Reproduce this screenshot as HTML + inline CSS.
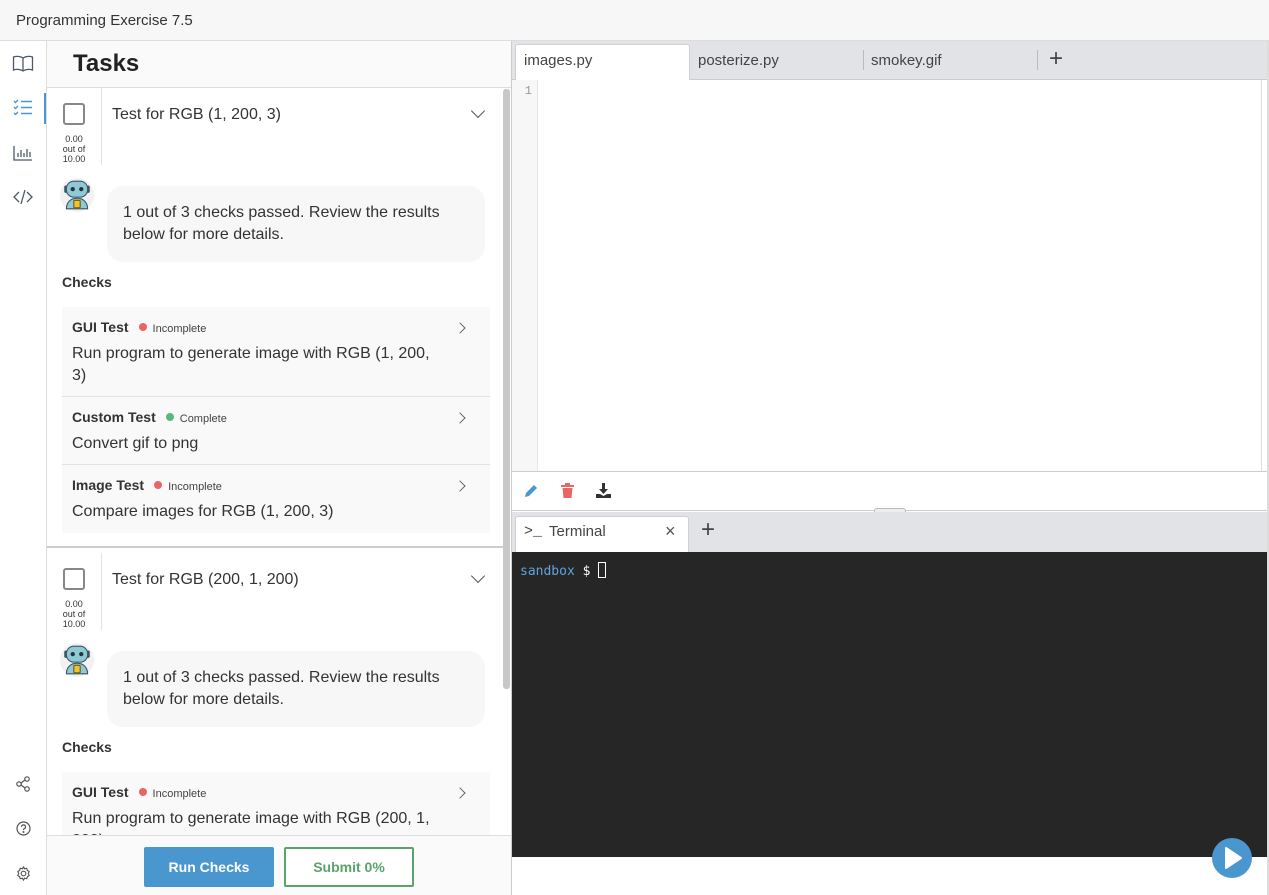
<!DOCTYPE html>
<html><head><meta charset="utf-8"><style>
*{box-sizing:border-box;margin:0;padding:0}
body{width:1269px;height:895px;overflow:hidden;font-family:"Liberation Sans",sans-serif;color:#333;background:#fff;position:relative}
.abs{position:absolute}
.title{left:0;top:0;width:1269px;height:41px;background:#f7f7f7;border-bottom:1px solid #ddd;font-size:15px;line-height:41px;padding-left:16px;color:#333}
.rail{left:0;top:41px;width:47px;height:854px;background:#fff;border-right:1px solid #ddd}
.tasks{left:47px;top:41px;width:464px;height:854px;background:#fff}
.hdr{left:0;top:0;width:464px;height:47px;border-bottom:1px solid #ddd;background:#fafafa}
.hdr b{position:absolute;left:26px;top:9px;font-size:24px;color:#222}
.cb{width:22px;height:22px;border:2px solid #888;border-radius:3px}
.score{font-size:9px;line-height:10px;text-align:center;width:40px;color:#333}
.ttl{font-size:16px;color:#333}
.chev{width:10px;height:10px;border-right:1.5px solid #555;border-bottom:1.5px solid #555;transform:rotate(45deg)}
.bubble{background:#f7f7f7;border-radius:16px;font-size:16px;line-height:22px;padding:16px;color:#333}
.checksl{font-size:14px;font-weight:bold;color:#333}
.item{background:#f9f9f9;border-bottom:1px solid #e3e3e3;padding:12px 10px 0 10px}
.item .n{font-size:14px;font-weight:bold;color:#333}
.item .st{font-size:11px;color:#444;font-weight:normal;margin-left:6px}
.dot{display:inline-block;width:8px;height:8px;border-radius:50%;margin-left:10px;vertical-align:1px}
.item .d{font-size:16px;line-height:22px;margin-top:6px;color:#333;width:375px}
.rc{width:8px;height:8px;border-right:1.3px solid #666;border-top:1.3px solid #666;transform:rotate(45deg);position:absolute;right:26px;top:17px}
.tabbar{background:#e1e3e6}
.tab{font-size:15px;color:#444}
</style></head><body>
<div class="abs title">Programming Exercise 7.5</div>
<div class="abs rail">
<svg class="abs" style="left:12px;top:14px" width="22" height="18" viewBox="0 0 22 18" fill="none" stroke="#4a5a6a" stroke-width="1.3"><path d="M11 3C8 1 4 1 1.5 2v13c2.5-1 6.5-1 9.5 1 3-2 7-2 9.5-1V2C18 1 14 1 11 3zM11 3v13"/></svg>
<div class="abs" style="left:44px;top:52px;width:2px;height:31px;background:#4a97cf"></div>
<svg class="abs" style="left:13px;top:58px" width="20" height="16" viewBox="0 0 20 16" fill="none" stroke="#4a97cf" stroke-width="1.4"><path d="M1 2l1.5 1.5L5 1M1 8l1.5 1.5L5 7M1 14l1.5 1.5L5 13M8 2.5h11M8 8.5h11M8 14.5h11"/></svg>
<svg class="abs" style="left:13px;top:104px" width="20" height="16" viewBox="0 0 20 16" fill="none" stroke="#4a5a6a" stroke-width="1.3"><path d="M1 1v14h18M5 12V8M8 12V5M11 12V8M14 12V4M17 12V7"/></svg>
<svg class="abs" style="left:12px;top:148px" width="22" height="16" viewBox="0 0 22 16" fill="none" stroke="#4a5a6a" stroke-width="1.3"><path d="M7 3L2 8l5 5M15 3l5 5-5 5M13 1L9 15"/></svg>
<svg class="abs" style="left:16px;top:735px" width="14" height="16" viewBox="0 0 14 16" fill="none" stroke="#555" stroke-width="1.2"><circle cx="3" cy="8" r="2.2"/><circle cx="11" cy="3" r="2.2"/><circle cx="11" cy="13" r="2.2"/><path d="M5 7l4-3M5 9l4 3"/></svg>
<svg class="abs" style="left:16px;top:780px" width="15" height="15" viewBox="0 0 15 15" fill="none" stroke="#555" stroke-width="1.2"><circle cx="7.5" cy="7.5" r="6.5"/><path d="M5.5 5.8a2 2 0 1 1 2.5 2c-.5.2-.5.7-.5 1.3"/><circle cx="7.5" cy="11" r=".4" fill="#555"/></svg>
<svg class="abs" style="left:16px;top:825px" width="15" height="15" viewBox="0 0 16 16" fill="none" stroke="#555" stroke-width="1.2"><circle cx="8" cy="8" r="2.5"/><path d="M8 1l1.2 2 2.3-.6.6 2.3 2 1.2-1 2.1 1 2.1-2 1.2-.6 2.3-2.3-.6L8 15l-1.2-2-2.3.6-.6-2.3-2-1.2 1-2.1-1-2.1 2-1.2.6-2.3 2.3.6z"/></svg>
</div>
<div class="abs tasks">
<div class="abs hdr"><b>Tasks</b></div>
<div class="abs" style="left:456px;top:48px;width:7px;height:600px;background:#c8c8c8;border-radius:3px"></div>
<div class="abs" style="left:0;top:0;width:456px;height:794px;overflow:hidden">
 <div class="abs" style="left:0;top:47px;width:456px">
  <div class="abs cb" style="left:16px;top:15px"></div>
  <div class="abs score" style="left:7px;top:46px">0.00<br>out of<br>10.00</div>
  <div class="abs" style="left:54px;top:0;width:1px;height:77px;background:#e3e3e3"></div>
  <div class="abs ttl" style="left:65px;top:18px">Test for RGB (1, 200, 3)</div>
  <div class="abs chev" style="left:426px;top:18px"></div>
  <svg class="abs" style="left:13px;top:90px" width="34" height="34" viewBox="0 0 32 32"><circle cx="16" cy="16" r="16" fill="#f2f2f2"/><rect x="4" y="7" width="3" height="7" rx="1.5" fill="#3b5560"/><rect x="25" y="7" width="3" height="7" rx="1.5" fill="#3b5560"/><rect x="6" y="3" width="20" height="15" rx="7" fill="#8fc9d6" stroke="#3b5560"/><circle cx="12" cy="10.5" r="2" fill="#22343c"/><circle cx="20" cy="10.5" r="2" fill="#22343c"/><path d="M6 29c0-6 4-10 10-10s10 4 10 10z" fill="#8fc9d6" stroke="#3b5560"/><rect x="13" y="21" width="6" height="7" rx="1" fill="#f2c230" stroke="#6b5a10"/></svg>
  <div class="abs bubble" style="left:60px;top:98px;width:378px;height:76px">1 out of 3 checks passed. Review the results below for more details.</div>
  <div class="abs checksl" style="left:15px;top:186px">Checks</div>
  <div class="abs" style="left:15px;top:219px;width:428px">
   <div class="item" style="height:90px;position:relative"><span class="n">GUI Test</span><span class="dot" style="background:#e96565"></span><span class="st">Incomplete</span><div class="rc"></div><div class="d">Run program to generate image with RGB (1, 200, 3)</div></div>
   <div class="item" style="height:68px;position:relative"><span class="n">Custom Test</span><span class="dot" style="background:#5ab87a"></span><span class="st">Complete</span><div class="rc"></div><div class="d">Convert gif to png</div></div>
   <div class="item" style="height:68px;position:relative;border-bottom:none"><span class="n">Image Test</span><span class="dot" style="background:#e96565"></span><span class="st">Incomplete</span><div class="rc"></div><div class="d">Compare images for RGB (1, 200, 3)</div></div>
  </div>
  <div class="abs" style="left:0;top:458px;width:456px;height:2px;background:#ccc"></div>
 </div>
 <div class="abs" style="left:0;top:512px;width:456px">
  <div class="abs cb" style="left:16px;top:15px"></div>
  <div class="abs score" style="left:7px;top:46px">0.00<br>out of<br>10.00</div>
  <div class="abs" style="left:54px;top:0;width:1px;height:77px;background:#e3e3e3"></div>
  <div class="abs ttl" style="left:65px;top:18px">Test for RGB (200, 1, 200)</div>
  <div class="abs chev" style="left:426px;top:18px"></div>
  <svg class="abs" style="left:13px;top:90px" width="34" height="34" viewBox="0 0 32 32"><circle cx="16" cy="16" r="16" fill="#f2f2f2"/><rect x="4" y="7" width="3" height="7" rx="1.5" fill="#3b5560"/><rect x="25" y="7" width="3" height="7" rx="1.5" fill="#3b5560"/><rect x="6" y="3" width="20" height="15" rx="7" fill="#8fc9d6" stroke="#3b5560"/><circle cx="12" cy="10.5" r="2" fill="#22343c"/><circle cx="20" cy="10.5" r="2" fill="#22343c"/><path d="M6 29c0-6 4-10 10-10s10 4 10 10z" fill="#8fc9d6" stroke="#3b5560"/><rect x="13" y="21" width="6" height="7" rx="1" fill="#f2c230" stroke="#6b5a10"/></svg>
  <div class="abs bubble" style="left:60px;top:98px;width:378px;height:76px">1 out of 3 checks passed. Review the results below for more details.</div>
  <div class="abs checksl" style="left:15px;top:186px">Checks</div>
  <div class="abs" style="left:15px;top:219px;width:428px">
   <div class="item" style="height:90px;position:relative"><span class="n">GUI Test</span><span class="dot" style="background:#e96565"></span><span class="st">Incomplete</span><div class="rc"></div><div class="d">Run program to generate image with RGB (200, 1, 200)</div></div>
  </div>
 </div>
</div>
<div class="abs" style="left:0;top:794px;width:464px;height:60px;background:#fafafa;border-top:1px solid #ddd">
 <div class="abs" style="left:97px;top:11px;width:130px;height:40px;background:#4a97cf;border-radius:2px;color:#fff;font-weight:bold;font-size:14px;text-align:center;line-height:40px">Run Checks</div>
 <div class="abs" style="left:237px;top:11px;width:130px;height:40px;border:2px solid #5aa36b;border-radius:2px;color:#5aa36b;font-weight:bold;font-size:14px;text-align:center;line-height:36px;background:#fff">Submit 0%</div>
</div>
</div>
<div class="abs" style="left:511px;top:41px;width:1px;height:854px;background:#ccc"></div>
<div class="abs" style="left:1267px;top:41px;width:2px;height:854px;background:#ddd"></div>
<div class="abs tabbar" style="left:512px;top:41px;width:755px;height:39px;border-bottom:1px solid #ccc">
 <div class="abs" style="left:3px;top:3px;width:175px;height:36px;background:#fff;border:1px solid #d0d0d0;border-bottom:none;border-radius:3px 3px 0 0"></div>
 <div class="abs tab" style="left:12px;top:11px">images.py</div>
 <div class="abs tab" style="left:186px;top:11px">posterize.py</div>
 <div class="abs" style="left:351px;top:9px;width:1px;height:20px;background:#bbb"></div>
 <div class="abs tab" style="left:359px;top:11px">smokey.gif</div>
 <div class="abs" style="left:525px;top:9px;width:1px;height:20px;background:#bbb"></div>
 <div class="abs" style="left:537px;top:4px;font-size:24px;color:#444;font-weight:300">+</div>
</div>
<div class="abs" style="left:512px;top:80px;width:26px;height:391px;background:#f7f7f7;border-right:1px solid #e5e5e5;font-family:'Liberation Mono',monospace;font-size:12px;color:#999;text-align:right;padding-right:5px;padding-top:4px">1</div>
<div class="abs" style="left:1261px;top:80px;width:1px;height:391px;background:#ddd"></div>
<div class="abs" style="left:512px;top:471px;width:755px;height:1px;background:#ccc"></div>
<svg class="abs" style="left:524px;top:483px" width="15" height="15" viewBox="0 0 15 15"><path d="M1 14l1-4 8-8 3 3-8 8z" fill="#4a97cf"/></svg>
<svg class="abs" style="left:561px;top:483px" width="13" height="15" viewBox="0 0 13 15"><path d="M0 2h13v2H0zM4 0h5v2H4zM1.5 5h10l-1 10h-8z" fill="#e96565"/></svg>
<svg class="abs" style="left:596px;top:483px" width="15" height="15" viewBox="0 0 15 15"><path d="M6 0h3v6h3l-4.5 5L3 6h3zM0 11h4l3.5 2 3.5-2h4v4H0z" fill="#333"/></svg>
<div class="abs" style="left:512px;top:510px;width:755px;height:1px;background:#ccc"></div>
<div class="abs" style="left:874px;top:508px;width:32px;height:6px;border:1px solid #bbb;border-radius:3px;background:#eee"></div>
<div class="abs tabbar" style="left:512px;top:512px;width:755px;height:40px">
 <div class="abs" style="left:3px;top:4px;width:174px;height:36px;background:#fff;border:1px solid #d0d0d0;border-bottom:none;border-radius:3px 3px 0 0"></div>
 <div class="abs tab" style="left:12px;top:11px;font-family:'Liberation Mono',monospace">&gt;_</div>
 <div class="abs tab" style="left:37px;top:11px">Terminal</div>
 <div class="abs" style="left:153px;top:9px;font-size:18px;color:#555">×</div>
 <div class="abs" style="left:189px;top:4px;font-size:24px;color:#444">+</div>
</div>
<div class="abs" style="left:512px;top:552px;width:755px;height:305px;background:#262626;font-family:'DejaVu Sans Mono',monospace;font-size:13px;padding:10px 8px;color:#fff"><span style="color:#5ea3e0">sandbox</span> $ <span style="display:inline-block;width:8px;height:16px;border:1px solid #fff;vertical-align:-3px"></span></div>
<svg class="abs" style="left:1212px;top:838px" width="40" height="40" viewBox="0 0 40 40"><circle cx="20" cy="20" r="20" fill="#4a97cf"/><path d="M14 10l15 10-15 10z" fill="#fff" stroke="#fff" stroke-width="2" stroke-linejoin="round"/></svg>
</body></html>
